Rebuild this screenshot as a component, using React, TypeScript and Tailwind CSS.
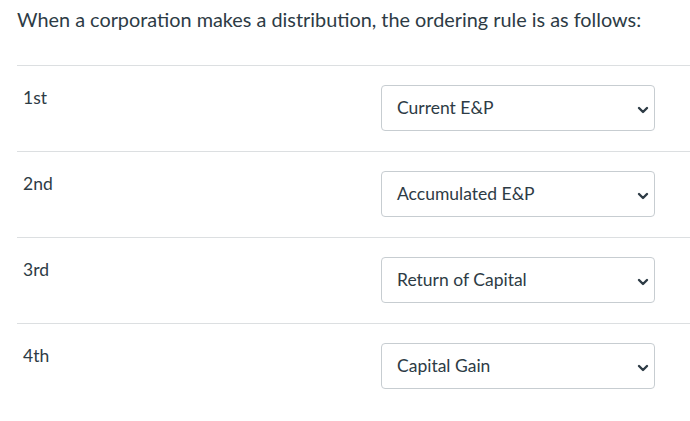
import React from "react";

const rows = [
  { label: "1st", value: "Current E&P" },
  { label: "2nd", value: "Accumulated E&P" },
  { label: "3rd", value: "Return of Capital" },
  { label: "4th", value: "Capital Gain" },
];

function Chevron() {
  return (
    <svg width="12" height="8" viewBox="0 0 12 8" className="absolute right-[5px] top-[20px]">
      <polyline points="2,2 6,6 10,2" fill="none" stroke="#2d3b45" strokeWidth="2.4" strokeLinecap="round" strokeLinejoin="round" />
    </svg>
  );
}

export default function App() {
  return (
    <div className="w-[690px] h-[421px] bg-white pl-[17px] text-[#2d3b45]" style={{ fontFamily: "Lato, 'Liberation Sans', sans-serif" }}>
      <div className="pt-[4px] h-[65px] text-[19.85px] leading-[30px]">
        When a corporation makes a distribution, the ordering rule is as follows:
      </div>
      {rows.map((r) => (
        <div key={r.label} className="flex items-start border-t border-[#dcdfe1] pt-[19px] pb-[20px] pl-[6px]">
          <div className="pt-[1px] text-[17.5px] leading-[24px] w-[358px]">{r.label}</div>
          <div className="relative w-[274px] h-[46px] rounded-[4px] border border-[#c7cdd1] bg-white">
            <div className="pl-[15px] text-[17.5px] leading-[44px]">{r.value}</div>
            <Chevron />
          </div>
        </div>
      ))}
    </div>
  );
}
